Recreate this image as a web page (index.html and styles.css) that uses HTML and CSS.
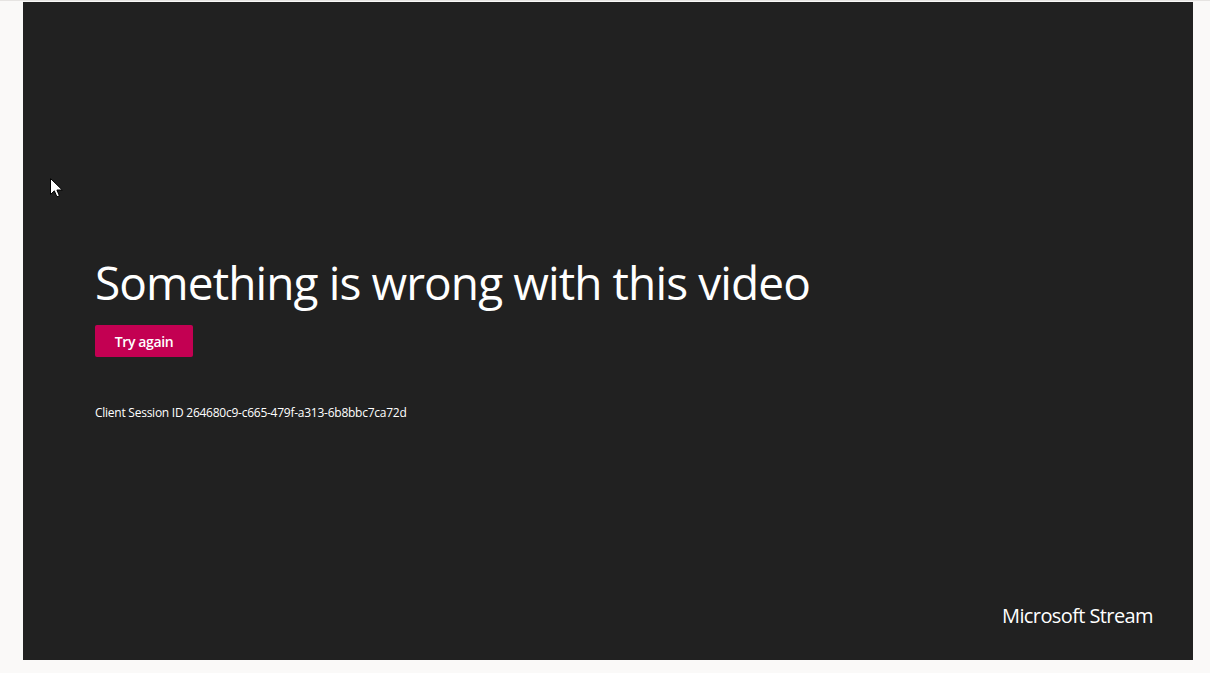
FILE: index.html
```html
<!DOCTYPE html>
<html lang="en">
<head>
<meta charset="utf-8">
<title>Microsoft Stream</title>
<link rel="stylesheet" href="styles.css">
</head>
<body>
<div class="topline"></div>
<main class="player">
  <section class="error">
    <h1 class="error-title">Something is wrong with this video</h1>
    <button class="retry" type="button">Try again</button>
    <p class="session">Client Session ID 264680c9-c665-479f-a313-6b8bbc7ca72d</p>
  </section>
  <footer class="brand">Microsoft Stream</footer>
  <svg class="cursor" width="14" height="21" viewBox="0 0 14 21" aria-hidden="true">
    <path d="M0.5 0.5 V16.5 L4.3 12.8 L6.9 18.8 L9.4 17.8 L6.9 12 H12.3 Z" fill="#fff" stroke="#000" stroke-width="1" stroke-linejoin="miter"/>
  </svg>
</main>
</body>
</html>
```
FILE: styles.css
```css
* { box-sizing: border-box; }
html, body { margin: 0; padding: 0; }
body {
  background: #faf9f8;
  width: 1210px;
  height: 673px;
  overflow: hidden;
  font-family: "Open Sans", "Noto Sans", "Liberation Sans", sans-serif;
}
.topline {
  height: 2px;
  border-top: 1px solid #e6e4e2;
}
.player {
  position: relative;
  margin-left: 23px;
  width: 1170px;
  height: 658px;
  background: #212121;
  color: #fff;
  display: flex;
  flex-direction: column;
  justify-content: space-between;
  padding: 250px 40px 30px 72px;
}
.error-title {
  margin: 0;
  font-weight: 400;
  font-size: 46px;
  line-height: 60px;
  letter-spacing: -0.9px;
}
.retry {
  margin-top: 13px;
  width: 98px;
  height: 32px;
  border: 0;
  border-radius: 2px;
  background: #c30052;
  color: #fff;
  font-family: inherit;
  font-weight: 600;
  font-size: 14px;
  letter-spacing: -0.4px;
  padding: 0;
}
.session {
  margin: 48px 0 0;
  font-size: 12px;
  line-height: 16px;
  letter-spacing: -0.25px;
}
.brand {
  align-self: flex-end;
  font-size: 20px;
  line-height: 28px;
  letter-spacing: -0.6px;
}
.cursor {
  position: absolute;
  left: 27px;
  top: 176px;
}
```
